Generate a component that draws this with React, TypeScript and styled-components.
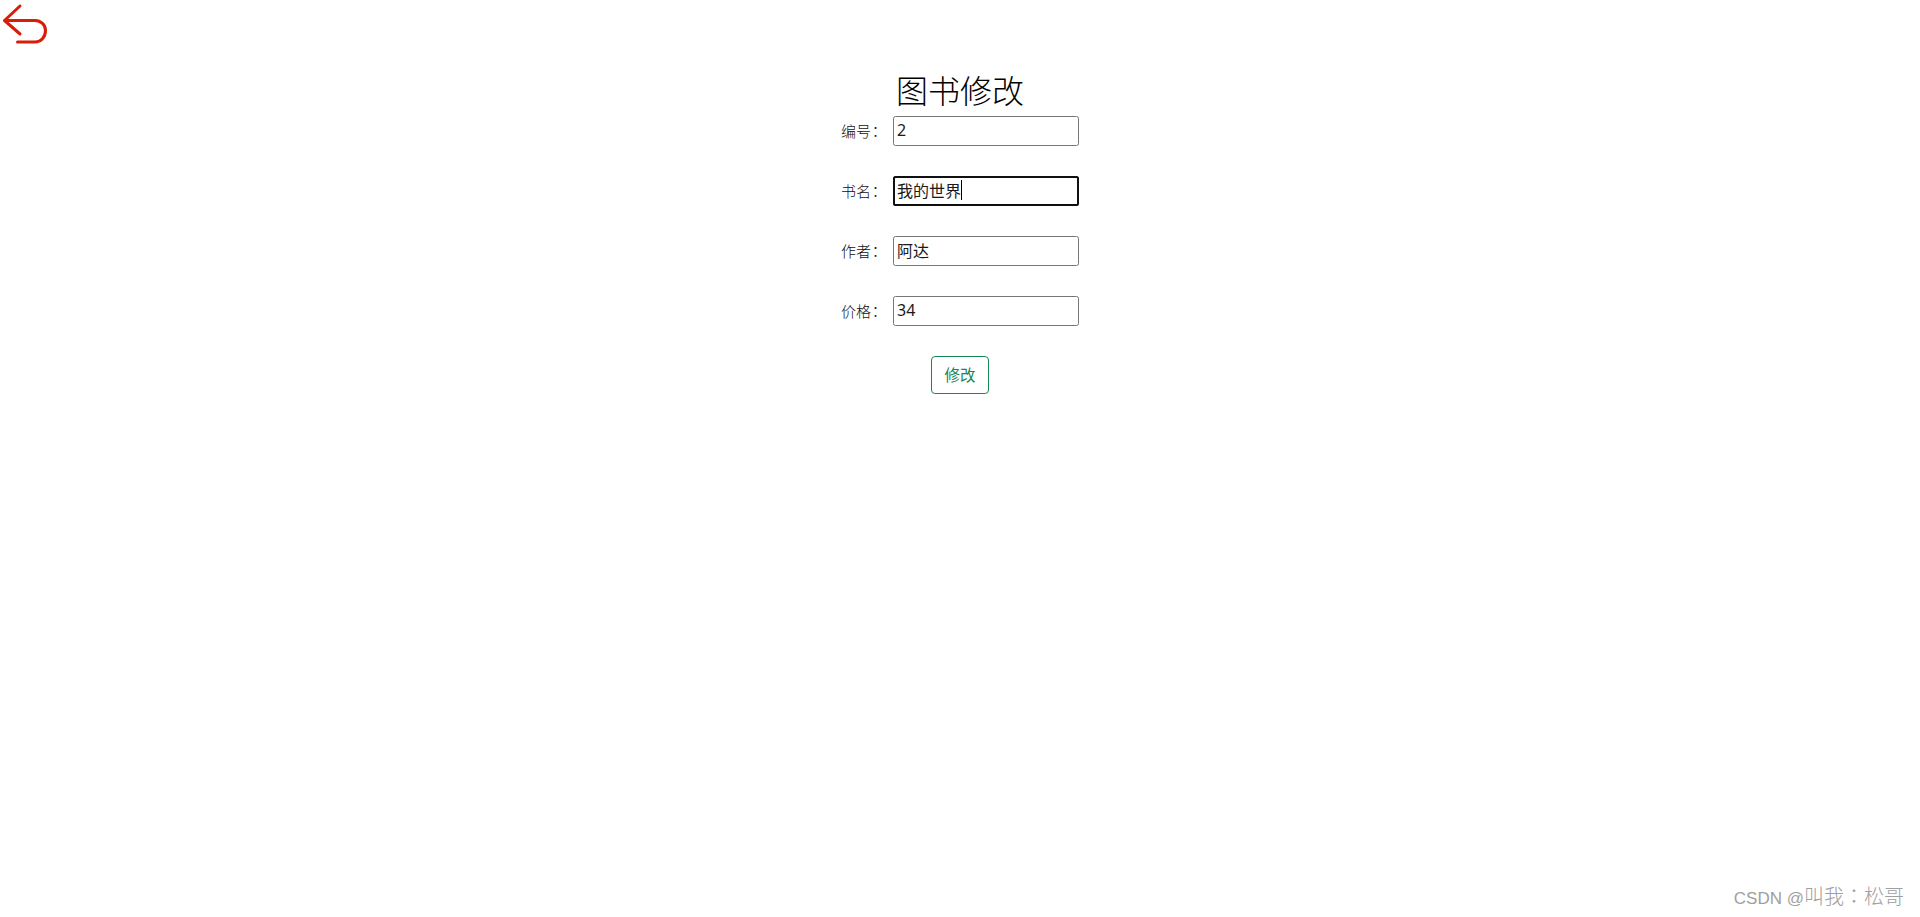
import React from "react";
import styled, { createGlobalStyle } from "styled-components";

const FONT = `"Noto Sans", "Noto Sans CJK SC", sans-serif`;

const Global = createGlobalStyle`
  html, body { margin: 0; padding: 0; background: #fff; }
  body { font-family: ${FONT}; color: #212529; }
`;

const Page = styled.div`
  position: relative;
  height: 917px;
  overflow: hidden;
  box-sizing: border-box;
`;

const BackLink = styled.a`
  display: block;
  width: 50px;
  height: 50px;
  color: #d81e06;
`;

const Title = styled.h2`
  margin: 20px 0 0;
  height: 46px;
  font-size: 32px;
  font-weight: 300;
  line-height: 42px;
  text-align: center;
  color: #000;
`;

const Form = styled.form`
  display: flex;
  flex-direction: column;
  align-items: center;
  gap: 30px;
`;

const Row = styled.div`
  display: flex;
  align-items: center;
  width: 238px;
  height: 30px;
`;

const Label = styled.label`
  flex: none;
  width: 45px;
  margin-right: 7px;
  font-size: 15px;
  font-weight: 300;
  line-height: 20px;
  white-space: nowrap;
  color: #111;
`;

const Colon = styled.span`
  font-family: "Noto Sans CJK TC", sans-serif;
`;

const LabelColon = styled(Colon)`
  margin-left: -3px;
`;

const Field = styled.input<{ $focused?: boolean }>`
  flex: none;
  box-sizing: border-box;
  width: 186px;
  height: 30px;
  padding: 0 3px 2px;
  font: 400 16px/20px ${FONT};
  color: #1a1a1a;
  background: #fff;
  border-radius: 2.5px;
  border: 1px solid #767676;
  outline: ${(p) => (p.$focused ? "2px solid #101010" : "none")};
  outline-offset: -2px;
`;

const FocusedWrap = styled.div`
  position: relative;
  flex: none;
`;

const Caret = styled.span`
  position: absolute;
  left: 68px;
  top: 4px;
  width: 1px;
  height: 20px;
  background: #000;
`;

const Submit = styled.button`
  box-sizing: border-box;
  width: 58px;
  height: 38px;
  padding: 0;
  font: 400 15.5px/20px ${FONT};
  color: #198754;
  background: #fff;
  border: 1px solid #198754;
  border-radius: 4px;
`;

const Watermark = styled.div`
  position: absolute;
  right: 16px;
  bottom: 6px;
  font-size: 20px;
  font-weight: 300;
  line-height: 24px;
  color: #a0a0a0;
  white-space: nowrap;
`;

const WatermarkLatin = styled.span`
  font-family: "Liberation Sans", sans-serif;
  font-size: 17px;
`;

const BackIcon = () => (
  <svg width="50" height="50" viewBox="0 0 50 50" fill="none" stroke="currentColor" strokeWidth="3" strokeLinecap="round" strokeLinejoin="round">
    <path d="M20 6 L4.5 20.5 L20 34" />
    <path d="M5 20.5 H35 C41 20.5 45.5 25 45.5 30.5 C45.5 37 41 42 35 42 H17.5" />
  </svg>
);

const FormLabel = ({ text }: { text: string }) => (
  <Label>
    {text}
    <LabelColon>：</LabelColon>
  </Label>
);

export default function App() {
  return (
    <Page>
      <Global />
      <BackLink href="#">
        <BackIcon />
      </BackLink>
      <Title>图书修改</Title>
      <Form onSubmit={(e) => e.preventDefault()}>
        <Row>
          <FormLabel text="编号" />
          <Field defaultValue="2" />
        </Row>
        <Row>
          <FormLabel text="书名" />
          <FocusedWrap>
            <Field $focused defaultValue="我的世界" />
            <Caret />
          </FocusedWrap>
        </Row>
        <Row>
          <FormLabel text="作者" />
          <Field defaultValue="阿达" />
        </Row>
        <Row>
          <FormLabel text="价格" />
          <Field defaultValue="34" />
        </Row>
        <Submit type="submit">修改</Submit>
      </Form>
      <Watermark>
        <WatermarkLatin>CSDN @</WatermarkLatin>叫我<Colon>：</Colon>松哥
      </Watermark>
    </Page>
  );
}
